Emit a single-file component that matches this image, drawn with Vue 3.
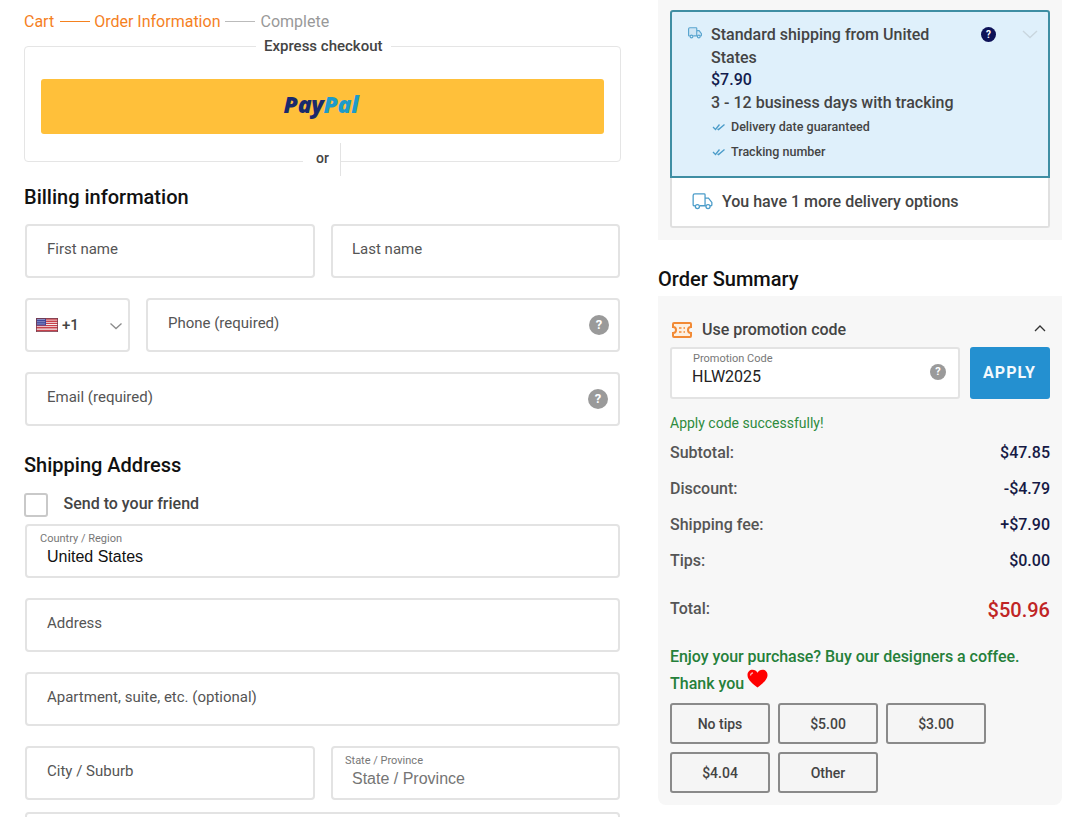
<script setup>
const rows = [
  { label: 'Subtotal:', value: '$47.85' },
  { label: 'Discount:', value: '-$4.79' },
  { label: 'Shipping fee:', value: '+$7.90' },
  { label: 'Tips:', value: '$0.00' },
]
const tips = ['No tips', '$5.00', '$3.00', '$4.04', 'Other']
</script>

<template>
  <div class="page">
    <main class="left">
      <nav class="steps">
        <span class="on">Cart</span>
        <i class="line line-on"></i>
        <span class="on">Order Information</span>
        <i class="line line-off"></i>
        <span class="off">Complete</span>
      </nav>

      <section class="express">
        <span class="express-title">Express checkout</span>
        <button class="paypal"><span class="pay">Pay</span><span class="pal">Pal</span></button>
        <span class="or">or</span>
      </section>

      <h2 class="h-billing">Billing information</h2>
      <div class="two">
        <div class="field"><span class="ph">First name</span></div>
        <div class="field"><span class="ph">Last name</span></div>
      </div>
      <div class="phone-row">
        <div class="field select">
          <svg class="flag" width="22" height="14" viewBox="0 0 22 14">
            <rect width="22" height="14" fill="#f4eeee" />
            <path d="M0 1h22M0 3.2h22M0 5.400h22M0 7.600h22M0 9.800h22M0 12.400h22" stroke="#c8414b" stroke-width="1.400" />
            <rect width="10" height="7.500" fill="#41479b" />
            <path d="M1.500 1.500h7M1.500 3.700h7M1.500 5.900h7" stroke="#dfe3f5" stroke-width=".9" stroke-dasharray="1 1" />
            <rect x=".4" y=".4" width="21.200" height="13.200" fill="none" stroke="#7a3a4a" stroke-width=".8" />
          </svg>
          <span class="code">+1</span>
          <svg class="sel-chev" width="14" height="8" viewBox="0 0 14 8"><path d="M1.500 1.500 7 6.500l5.500-5" fill="none" stroke="#8b8b8b" stroke-width="1.300" /></svg>
        </div>
        <div class="field grow">
          <span class="ph">Phone (required)</span>
          <span class="help">?</span>
        </div>
      </div>
      <div class="field wide">
        <span class="ph">Email (required)</span>
        <span class="help email-help">?</span>
      </div>

      <h2 class="h-shipping">Shipping Address</h2>
      <label class="friend"><span class="box"></span>Send to your friend</label>
      <div class="field wide first-wide filled">
        <span class="mini">Country / Region</span>
        <span class="val">United States</span>
      </div>
      <div class="field wide"><span class="ph">Address</span></div>
      <div class="field wide"><span class="ph">Apartment, suite, etc. (optional)</span></div>
      <div class="two city">
        <div class="field"><span class="ph">City / Suburb</span></div>
        <div class="field filled">
          <span class="mini mini-state">State / Province</span>
          <span class="val muted">State / Province</span>
        </div>
      </div>
      <div class="field wide last"></div>
    </main>

    <aside class="right">
      <section class="ship-panel">
        <div class="ship-card">
          <svg class="truck-s" width="14" height="12" viewBox="0 0 24 20"><path d="M3 15H2a1 1 0 0 1-1-1V3a2 2 0 0 1 2-2h11a1 1 0 0 1 1 1v13H9M15 6h4l4 5v3a1 1 0 0 1-1 1h-1M15 15h1" fill="#cfe6f5" stroke="#5aa5cf" stroke-width="2" /><circle cx="6" cy="16" r="2.400" fill="none" stroke="#5aa5cf" stroke-width="2" /><circle cx="18.500" cy="16" r="2.400" fill="none" stroke="#5aa5cf" stroke-width="2" /></svg>
          <div class="ship-body">
            <div class="ship-name">Standard shipping from United States</div>
            <div class="ship-price">$7.90</div>
            <div class="ship-time">3 - 12 business days with tracking</div>
            <div class="check">
              <svg width="14" height="8" viewBox="0 0 14 8"><path d="M1 4l2.500 2.500L7.500 1.500M5.500 6l1 .6L12.500 1.500" fill="none" stroke="#4b9cc9" stroke-width="1.300" /></svg>
              Delivery date guaranteed
            </div>
            <div class="check">
              <svg width="14" height="8" viewBox="0 0 14 8"><path d="M1 4l2.500 2.500L7.500 1.500M5.500 6l1 .6L12.500 1.500" fill="none" stroke="#4b9cc9" stroke-width="1.300" /></svg>
              Tracking number
            </div>
          </div>
          <span class="ship-help">?</span>
          <svg class="ship-chev" width="16" height="9" viewBox="0 0 16 9"><path d="M1 1l7 6.500L15 1" fill="none" stroke="#c9d6de" stroke-width="1.400" /></svg>
        </div>
        <div class="more-card">
          <svg width="21" height="17" viewBox="0 0 24 20"><path d="M3 15H2a1 1 0 0 1-1-1V3a2 2 0 0 1 2-2h11a1 1 0 0 1 1 1v13H9M15 6h4l4 5v3a1 1 0 0 1-1 1h-1M15 15h1" fill="none" stroke="#4b9cc9" stroke-width="1.500" /><circle cx="6" cy="16" r="2.400" fill="none" stroke="#4b9cc9" stroke-width="1.500" /><circle cx="18.500" cy="16" r="2.400" fill="none" stroke="#4b9cc9" stroke-width="1.500" /></svg>
          <span>You have 1 more delivery options</span>
        </div>
      </section>

      <h2 class="h-summary">Order Summary</h2>
      <section class="summary">
        <div class="promo-head">
          <svg width="20" height="16" viewBox="0 0 20 16"><path d="M2 1h16a1 1 0 0 1 1 1v3a3 3 0 0 0 0 6v3a1 1 0 0 1-1 1H2a1 1 0 0 1-1-1v-3a3 3 0 0 0 0-6V2a1 1 0 0 1 1-1z" fill="#fdf0e2" stroke="#f28a35" stroke-width="2" /><path d="M7 6h2.500M11.500 6h1.500M7 10h2.500M11.500 10h1.500" stroke="#f28a35" stroke-width="1.600" /></svg>
          <span class="promo-label">Use promotion code</span>
          <svg class="promo-chev" width="12" height="7" viewBox="0 0 12 7"><path d="M1 6l5-5 5 5" fill="none" stroke="#333" stroke-width="1.300" /></svg>
        </div>
        <div class="promo-row">
          <div class="promo-input">
            <span class="mini-promo">Promotion Code</span>
            <span class="promo-val">HLW2025</span>
            <span class="help small">?</span>
          </div>
          <button class="apply">APPLY</button>
        </div>
        <p class="success">Apply code successfully!</p>

        <div v-for="row in rows" :key="row.label" class="sum-row">
          <span>{{ row.label }}</span>
          <b>{{ row.value }}</b>
        </div>
        <div class="total-row">
          <span>Total:</span>
          <b>$50.96</b>
        </div>

        <p class="enjoy">Enjoy your purchase? Buy our designers a coffee.</p>
        <p class="thanks">
          Thank you
          <svg class="heart" width="21" height="19" viewBox="0 0 21 19"><path d="M10.500 18.500C3 13 .5 9.500.5 6 .5 2.800 2.800.8 5.500.8c2.200 0 4 1 5 3 1-2 2.800-3 5-3 2.700 0 5 2 5 5.200 0 3.500-2.500 7-10 12.500z" fill="#f00" /><path d="M3.500 6.500C3.600 5 4.500 4 6 3.800" fill="none" stroke="#ffb3b3" stroke-width="1.200" /></svg>
        </p>
        <div class="tips">
          <button v-for="tip in tips" :key="tip" class="tip">{{ tip }}</button>
        </div>
      </section>
    </aside>
  </div>
</template>

<style>
html, body { margin: 0; background: #fff; }
</style>

<style scoped>
* { box-sizing: border-box; }
.page {
  width: 1075px;
  height: 817px;
  overflow: hidden;
  display: flex;
  font-family: Roboto, "Liberation Sans", sans-serif;
  color: #444;
}
.left {
  width: 596px;
  margin-left: 24px;
  flex: none;
}
.right {
  width: 404px;
  margin-left: 38px;
  flex: none;
}
h2 {
  margin: 0;
  font-size: 20px;
  line-height: 24px;
  font-weight: 500;
  color: #111;
}
.steps {
  height: 46px;
  padding-bottom: 4px;
  display: flex;
  align-items: center;
  font-size: 16px;
}
.on { color: #f5811f; }
.off { color: #999; }
.line { display: block; height: 1px; width: 30px; }
.line-on { background: #f5811f; margin: 0 4px 0 6px; }
.line-off { background: #bbb; margin: 0 5px; }

.express {
  position: relative;
  height: 116px;
  width: 597px;
  border: 1px solid #e5e5e5;
  border-radius: 4px;
  padding: 32px 16px 0;
}
.express-title {
  position: absolute;
  left: 231px;
  top: -10px;
  padding: 0 8px;
  background: #fff;
  font-size: 15px;
  line-height: 18px;
  font-weight: 500;
}
.paypal {
  display: block;
  width: 563px;
  height: 55px;
  border: 0;
  border-radius: 3px;
  background: #ffc03a;
  font-family: "Open Sans", sans-serif;
  font-size: 23px;
  line-height: 51px;
  font-weight: 800;
  font-style: italic;
  letter-spacing: -.3px;
  padding: 0 3px 4px 0;
}
.pay { color: #1a2a6c; }
.pal { color: #1d9bc9; }
.or {
  position: absolute;
  left: 278px;
  top: 96px;
  width: 38px;
  height: 33px;
  background: #fff;
  border-right: 1px solid #e3e3e3;
  font-size: 14px;
  line-height: 30px;
  font-weight: 500;
  padding-left: 2px;
  text-align: center;
}

.h-billing { margin-top: 23px; }
.field {
  position: relative;
  height: 54px;
  border: 2px solid #e3e3e3;
  border-radius: 4px;
  background: #fff;
  display: flex;
  padding-left: 20px;
  font-size: 15px;
  flex: none;
}
.ph {
  margin-top: 13px;
  line-height: 20px;
  color: #555;
}
.two {
  display: flex;
  gap: 16px;
  margin: 15px 0 0 1px;
}
.two .field:first-child { width: 290px; }
.two .field:last-child { width: 289px; padding-left: 19px; }
.phone-row {
  display: flex;
  gap: 16px;
  margin: 20px 0 0 1px;
}
.select {
  width: 105px;
  padding-left: 9px;
  align-items: center;
}
.flag { margin-top: 0; flex: none; }
.code { margin-left: 4px; font-weight: 500; color: #444; }
.sel-chev { position: absolute; right: 5px; top: 22px; }
.grow { width: 474px; }
.wide {
  width: 595px;
  margin: 20px 0 0 1px;
}
.help {
  position: absolute;
  right: 9px;
  top: 15px;
  width: 20px;
  height: 20px;
  border-radius: 50%;
  background: #9a9a9a;
  color: #fff;
  font-size: 13px;
  line-height: 20px;
  font-weight: 700;
  text-align: center;
}
.email-help { right: 10px; }
.h-shipping { margin-top: 27px; }
.friend {
  display: flex;
  align-items: center;
  height: 24px;
  margin-top: 15px;
  padding-bottom: 0;
  font-size: 16px;
  line-height: 22px;
  font-weight: 500;
  color: #444;
}
.box {
  width: 24px;
  height: 24px;
  margin-right: 15.500px;
  margin-bottom: -1px;
  border: 2px solid #c9c9c9;
  border-radius: 3px;
}
.first-wide { margin-top: 8px; }
.filled { display: block; padding-left: 20px; }
.mini {
  position: absolute;
  left: 13px;
  top: 6px;
  font-size: 11px;
  line-height: 14px;
  color: #777;
}
.mini-state { left: 12px; }
.val {
  display: block;
  padding-top: 21px;
  font-family: "Liberation Sans", sans-serif;
  font-size: 16px;
  line-height: 20px;
  color: #111;
}
.muted { color: #757575; }
.city { margin-top: 20px; }
.last { margin-top: 12px; }

.ship-panel {
  height: 240px;
  padding: 10px 12px 0;
  background: #f7f7f7;
}
.ship-card {
  position: relative;
  height: 168px;
  border: 2px solid #3f8ea3;
  border-radius: 3px 3px 0 0;
  background: #dff0fb;
  padding: 11px 0 0 39px;
}
.truck-s { position: absolute; left: 16px; top: 15px; }
.ship-body { width: 250px; }
.ship-name {
  font-size: 16px;
  line-height: 23px;
  font-weight: 500;
  color: #444;
}
.ship-price {
  font-size: 16px;
  line-height: 22px;
  font-weight: 500;
  color: #131c4e;
}
.ship-time {
  width: 300px;
  font-size: 16px;
  line-height: 23px;
  font-weight: 500;
  color: #444;
}
.check {
  display: flex;
  align-items: center;
  gap: 5px;
  width: 300px;
  margin-left: 1px;
  font-size: 12.500px;
  line-height: 25px;
  font-weight: 500;
  color: #444;
}
.ship-help {
  position: absolute;
  left: 309px;
  top: 15px;
  width: 15px;
  height: 15px;
  border-radius: 50%;
  background: #0e1257;
  color: #fff;
  font-size: 10px;
  line-height: 15px;
  font-weight: 700;
  text-align: center;
}
.ship-chev { position: absolute; left: 350px; top: 18px; }
.more-card {
  height: 50px;
  display: flex;
  align-items: center;
  gap: 9px;
  padding: 0 0 2px 20px;
  background: #fff;
  border: 2px solid #e0e0e0;
  border-top: 0;
  border-radius: 0 0 3px 3px;
  font-size: 16px;
  font-weight: 500;
  color: #444;
}

.h-summary { margin-top: 27px; }
.summary {
  height: 509px;
  margin-top: 5px;
  padding: 0 12px;
  background: #f7f7f7;
  border-radius: 0 0 8px 8px;
}
.promo-head {
  position: relative;
  display: flex;
  align-items: center;
  height: 51px;
  padding: 16px 0 0 2px;
}
.promo-label {
  margin-left: 10px;
  font-size: 16px;
  font-weight: 500;
  color: #444;
}
.promo-chev { position: absolute; right: 4px; top: 29px; }
.promo-row { display: flex; gap: 10px; }
.promo-input {
  position: relative;
  width: 290px;
  height: 52px;
  border: 2px solid #e3e3e3;
  border-radius: 3px;
  background: #fff;
}
.mini-promo {
  position: absolute;
  left: 21px;
  top: 3px;
  font-size: 11px;
  line-height: 14px;
  color: #777;
}
.promo-val {
  position: absolute;
  left: 20px;
  top: 18px;
  font-size: 16px;
  line-height: 20px;
  color: #222;
}
.help.small {
  right: 12px;
  top: 15px;
  width: 16px;
  height: 16px;
  font-size: 11px;
  line-height: 16px;
}
.apply {
  width: 80px;
  height: 52px;
  border: 0;
  border-radius: 3px;
  background: #2490d0;
  color: #f3f9fd;
  font-family: Roboto, sans-serif;
  font-size: 16px;
  font-weight: 700;
  letter-spacing: 1px;
  padding: 0 1px 2px 0;
}
.success {
  margin: 15px 0 0;
  font-size: 14px;
  line-height: 18px;
  color: #2e8b3e;
}
.sum-row {
  display: flex;
  justify-content: space-between;
  align-items: center;
  height: 36px;
  font-size: 16px;
  font-weight: 500;
  color: #555;
}
.success + .sum-row { margin-top: 2px; }
.sum-row b { font-weight: 500; color: #161a45; }
.total-row {
  display: flex;
  justify-content: space-between;
  align-items: center;
  height: 30px;
  margin-top: 15px;
  font-size: 16px;
  font-weight: 500;
  color: #555;
}
.total-row b { margin-top: 4px; font-size: 20px; font-weight: 500; color: #c02525; }
.enjoy, .thanks {
  margin: 0;
  font-size: 16px;
  font-weight: 500;
  line-height: 22px;
  color: #25803a;
}
.enjoy { margin-top: 23px; letter-spacing: -.04px; }
.thanks { position: relative; margin-top: 5px; height: 24px; }
.heart { position: absolute; left: 77px; top: -4px; }
.tips {
  display: flex;
  flex-wrap: wrap;
  gap: 8px;
  width: 330px;
  margin-top: 6px;
}
.tip {
  width: 100px;
  height: 41px;
  border: 2px solid #8a8a8a;
  border-radius: 3px;
  background: #f5f5f5;
  color: #444;
  font-family: Roboto, sans-serif;
  font-size: 14px;
  font-weight: 500;
  padding: 0;
}
</style>
